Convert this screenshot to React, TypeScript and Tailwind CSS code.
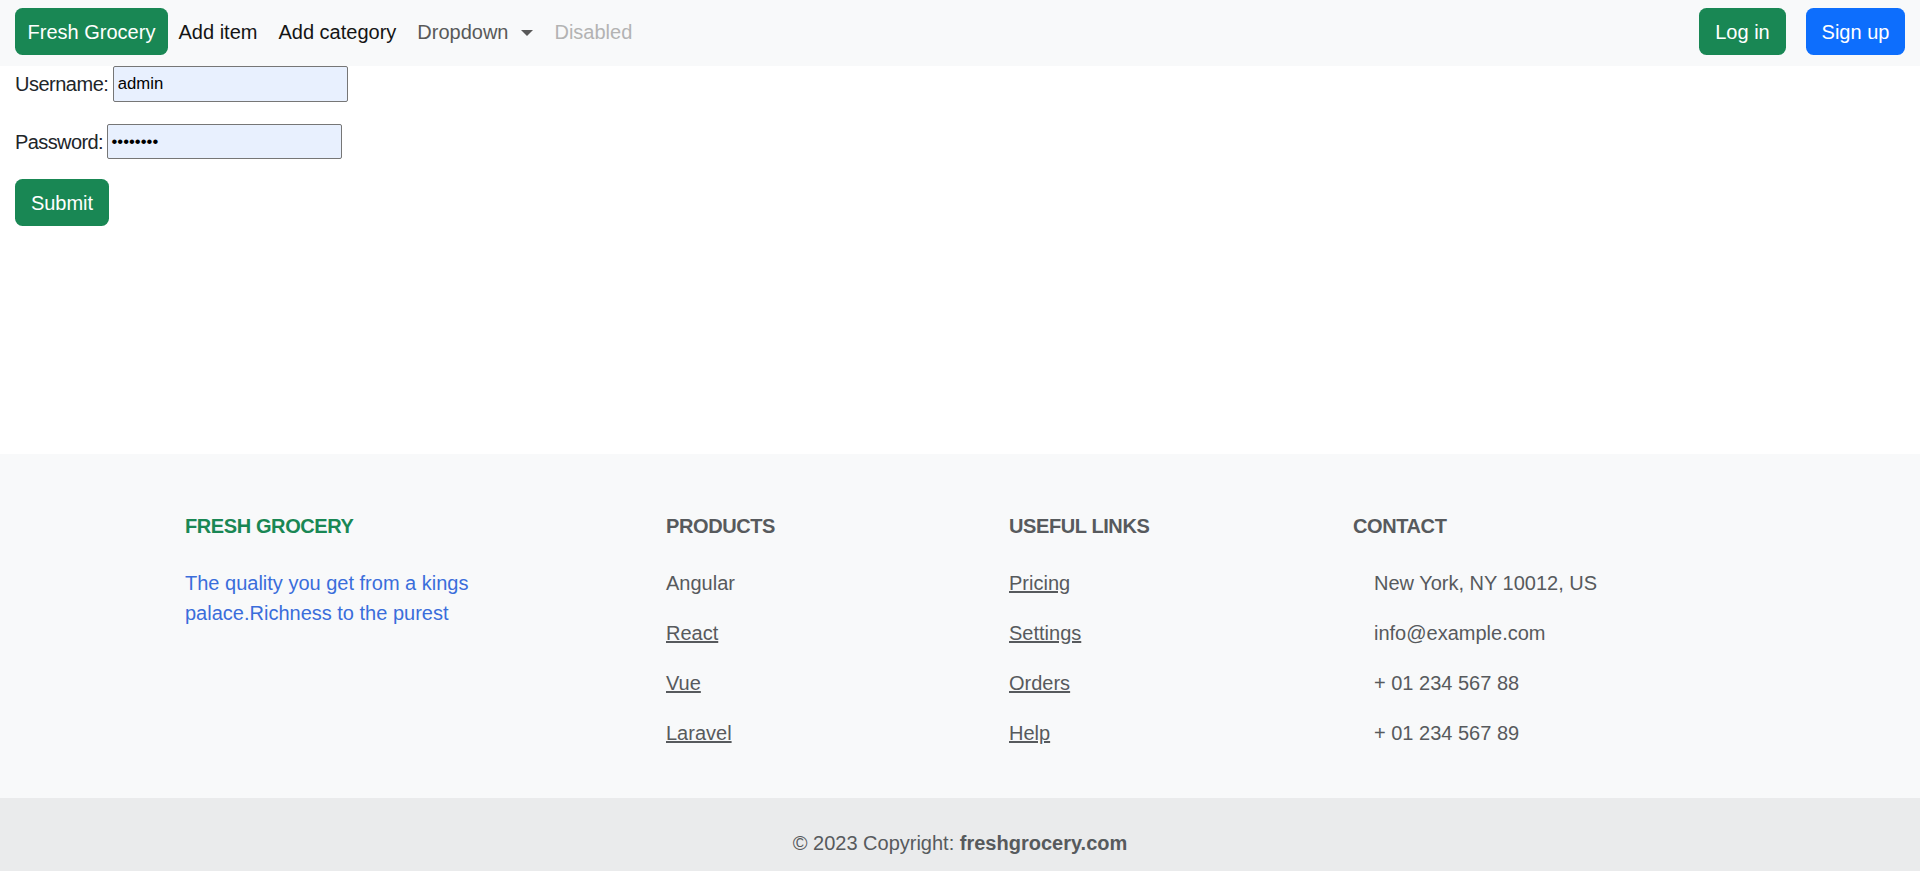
import React from 'react'

const font = { fontFamily: '"Segoe UI", "Liberation Sans", Arial, sans-serif' }

function NavBar() {
  return (
    <nav className="flex h-[66px] items-start bg-[#f8f9fa] px-[15px] pt-[8px]">
      <a className="flex h-[47px] w-[153px] items-center justify-center rounded-[7.5px] bg-[#198754] text-[20px] text-white">
        Fresh Grocery
      </a>
      <div className="flex h-[47px] items-center text-[20px]">
        <a className="px-[10.5px] text-[#141414]">Add item</a>
        <a className="px-[10.5px] text-[#141414]">Add category</a>
        <a className="flex items-center px-[10.5px] text-[#595959]">
          Dropdown
          <span className="ml-[13px] mt-[2px] h-0 w-0 border-x-[6px] border-t-[6px] border-x-transparent border-t-[#595959]" />
        </a>
        <a className="px-[10.5px] text-[#b3b3b3]">Disabled</a>
      </div>
      <div className="ml-auto flex gap-[20px]">
        <button className="flex h-[47px] w-[87px] items-center justify-center rounded-[7.5px] bg-[#198754] text-[20px] text-white">
          Log in
        </button>
        <button className="flex h-[47px] w-[99px] items-center justify-center rounded-[7.5px] bg-[#0d6efd] text-[20px] text-white">
          Sign up
        </button>
      </div>
    </nav>
  )
}

function LoginForm() {
  return (
    <form className="flex h-[388px] flex-col items-start px-[15px] text-[20px] text-[#212529]">
      <div className="flex h-[36px] items-center gap-[5px]">
        <label className="tracking-[-0.5px]">Username:</label>
        <input
          readOnly
          defaultValue="admin"
          className="h-[36px] w-[235px] rounded-[2px] border border-[#767676] bg-[#e8f0fe] px-[3.5px] text-[16.7px] text-black outline-none"
          style={{ fontFamily: '"Liberation Sans", Arial, sans-serif' }}
        />
      </div>
      <div className="mt-[22px] flex h-[35px] items-center gap-[4px]">
        <label className="tracking-[-0.6px]">Password:</label>
        <input
          readOnly
          type="password"
          defaultValue="password"
          className="h-[35px] w-[235px] rounded-[2px] border border-[#767676] bg-[#e8f0fe] px-[3.5px] text-[16.7px] text-black outline-none"
          style={{ fontFamily: '"Liberation Sans", Arial, sans-serif' }}
        />
      </div>
      <button
        type="button"
        className="mt-[20px] flex h-[47px] w-[94px] items-center justify-center rounded-[7.5px] bg-[#198754] text-[20px] text-white"
      >
        Submit
      </button>
    </form>
  )
}

const products = ['Angular', 'React', 'Vue', 'Laravel']
const links = ['Pricing', 'Settings', 'Orders', 'Help']
const contacts = ['New York, NY 10012, US', 'info@example.com', '+ 01 234 567 88', '+ 01 234 567 89']

function Footer() {
  return (
    <footer className="bg-[#f8f9fa] text-[20px] text-[#575a5d]">
      <section className="flex pb-[30px] pl-[185px] pt-[60px]">
        <div className="w-[481px]">
          <h6 className="mb-[30px] text-[20px] font-bold uppercase leading-[24px] tracking-[-0.4px] text-[#198754]">
            Fresh Grocery
          </h6>
          <p className="w-[382px] leading-[30px] text-[#3a6ddb]">
            The quality you get from a kings palace.Richness to the purest
          </p>
        </div>
        <div className="w-[343px]">
          <h6 className="mb-[30px] text-[20px] font-bold uppercase leading-[24px] tracking-[-0.4px]">Products</h6>
          {products.map((p, i) => (
            <p key={p} className="mb-[20px] leading-[30px]">
              {i === 0 ? p : <a className="underline">{p}</a>}
            </p>
          ))}
        </div>
        <div className="w-[344px]">
          <h6 className="mb-[30px] text-[20px] font-bold uppercase leading-[24px] tracking-[-0.4px]">Useful links</h6>
          {links.map((l) => (
            <p key={l} className="mb-[20px] leading-[30px]">
              <a className="underline">{l}</a>
            </p>
          ))}
        </div>
        <div className="flex-1">
          <h6 className="mb-[30px] text-[20px] font-bold uppercase leading-[24px] tracking-[-0.4px]">Contact</h6>
          {contacts.map((c) => (
            <p key={c} className="mb-[20px] pl-[21px] leading-[30px]">
              {c}
            </p>
          ))}
        </div>
      </section>
      <div className="bg-[#eaebec] py-[30px] text-center leading-[30px]">
        © 2023 Copyright: <a className="font-bold">freshgrocery.com</a>
      </div>
    </footer>
  )
}

export default function App() {
  return (
    <div className="min-h-screen bg-white" style={font}>
      <NavBar />
      <LoginForm />
      <Footer />
    </div>
  )
}
